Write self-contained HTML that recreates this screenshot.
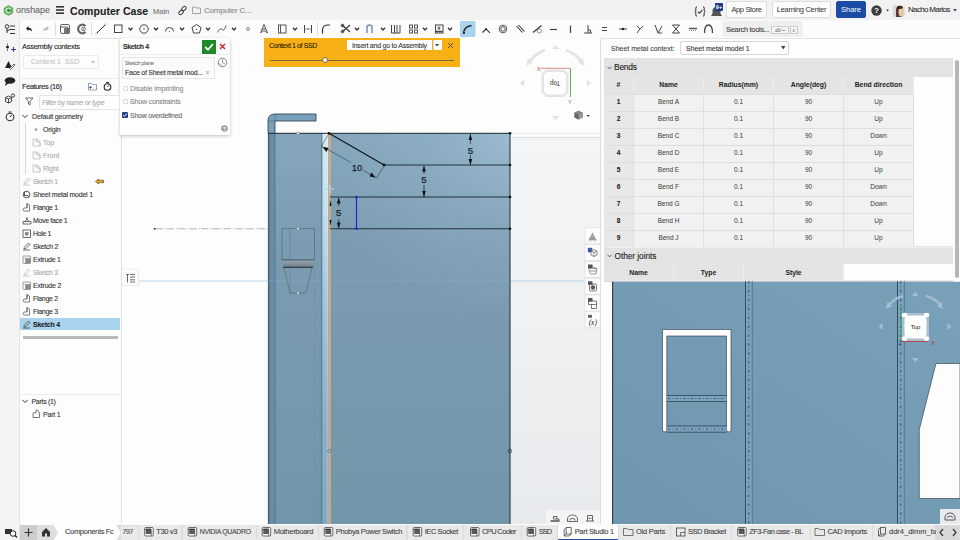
<!DOCTYPE html>
<html><head><meta charset="utf-8">
<style>
*{margin:0;padding:0;box-sizing:border-box}
html,body{width:960px;height:540px;overflow:hidden;background:#fdfdfd;font-family:"Liberation Sans",sans-serif;color:#333;position:relative}
.a{position:absolute}
.t{position:absolute;white-space:nowrap;line-height:1;-webkit-text-stroke:.1px currentColor}
svg{position:absolute;overflow:visible}
#hdr{left:0;top:0;width:960px;height:19.6px;background:#f2f2f3}
#tb{left:0;top:19.6px;width:960px;height:18.4px;background:#fcfcfc}
#rail{left:0;top:19.6px;width:20px;height:521px;background:#f4f4f4;border-right:1px solid #e4e4e4}
#fp{left:20px;top:38px;width:102px;height:486px;background:#fdfdfd;border-right:1px solid #e2e2e2;border-top:1px solid #e6e6e6}
#sk{left:120px;top:38px;width:110px;height:97px;background:#fefefe;box-shadow:0 1px 3px rgba(0,0,0,.25)}
#ctx{left:264px;top:38px;width:196px;height:29px;background:#f7b015}
#rp{left:600px;top:38px;width:360px;height:486px;background:#fdfdfd;border-left:1px solid #dcdcdc;border-top:1px solid #e4e4e4;border-top-left-radius:2px}
#tabs{left:20px;top:524px;width:940px;height:16px;background:#ececec}
.btn{position:absolute;border:1px solid #dcdcdc;border-radius:2px;background:#fdfdfd;font-size:7.5px;color:#333;text-align:center;line-height:16.2px;white-space:nowrap}
</style></head><body>
<!-- viewport background -->
<div class="a" style="left:122px;top:38px;width:478px;height:486px;background:#fdfdfd"></div>
<div class="a" style="left:510px;top:137.5px;width:90px;height:386.5px;background:linear-gradient(#f4f5f6 0%,#eef0f1 50%,#e7eaec 100%)"></div>
<!-- CAD drawing -->
<svg id="cad" style="left:0;top:0" width="960" height="540" viewBox="0 0 960 540">
<defs>
<linearGradient id="body" x1="0" y1="0" x2="0" y2="1">
<stop offset="0" stop-color="#85a6bb"/><stop offset=".3" stop-color="#7b9bb0"/><stop offset="1" stop-color="#7296a9"/>
</linearGradient>
<radialGradient id="bodyR" cx="510" cy="133" r="190" gradientUnits="userSpaceOnUse">
<stop offset="0" stop-color="#9cbdd0" stop-opacity=".95"/><stop offset=".5" stop-color="#90b2c6" stop-opacity=".45"/><stop offset="1" stop-color="#90b2c6" stop-opacity="0"/>
</radialGradient>
<linearGradient id="strip" x1="0" y1="0" x2="0" y2="1">
<stop offset="0" stop-color="#d2ecf7"/><stop offset=".2" stop-color="#bddff0"/><stop offset=".45" stop-color="#98c2de"/><stop offset=".75" stop-color="#80acca"/><stop offset="1" stop-color="#78a4c2"/>
</linearGradient>
<linearGradient id="stripH" x1="0" y1="0" x2="1" y2="0"><stop offset="0" stop-color="#6a90aa" stop-opacity=".35"/><stop offset=".5" stop-color="#fff" stop-opacity="0"/><stop offset="1" stop-color="#fff" stop-opacity=".25"/></linearGradient>
<linearGradient id="leg" x1="0" y1="0" x2="1" y2="0">
<stop offset="0" stop-color="#4e6c82"/><stop offset=".45" stop-color="#6a8ea8"/><stop offset="1" stop-color="#6a8da6"/>
</linearGradient>
</defs>
<!-- faint line right of part -->
<path d="M510 133.4 H600" stroke="#dedede" stroke-width=".8"/><path d="M510 137.4 H600" stroke="#d4d4d4" stroke-width=".8"/>
<!-- dash-dot line -->
<path d="M155.5 228.8 H268" stroke="#aaaaaa" stroke-width=".9" stroke-dasharray="7.2 2 1 1.2"/>
<rect x="153.8" y="227.9" width="1.8" height="1.8" fill="#444"/>
<!-- body -->
<rect x="268" y="133" width="242" height="391" fill="url(#body)"/>
<rect x="329" y="133" width="181" height="200" fill="url(#bodyR)"/>
<rect x="268" y="133" width="7" height="391" fill="url(#leg)"/>
<path d="M268 133 V121 Q268 114 275 114 H316 V121 H275 V133Z" fill="#78a0ba"/>
<path d="M268 133 V121 Q268 114 275 114 H316 V121 H275 V133" fill="none" stroke="#34495a" stroke-width=".9"/>
<path d="M268 121 H275 M275 114 V121" stroke="#4a6a80" stroke-width=".6"/>
<path d="M268.3 133 V524" stroke="#405a6c" stroke-width=".7"/>
<path d="M275 133 V524" stroke="#4a6a80" stroke-width=".7"/>
<rect x="322" y="133" width="6" height="391" fill="url(#strip)"/><rect x="322" y="133" width="6" height="391" fill="url(#stripH)"/>
<path d="M321.7 133 V524" stroke="#4e6e86" stroke-width=".7"/>
<rect x="328.2" y="133" width="2.6" height="391" fill="#ceac8c"/>
<!-- horizontal light blue line -->
<path d="M137 281 H268 M510 281 H600" stroke="#a6d0ea" stroke-width=".8"/>
<path d="M268 281 H510" stroke="#9cc4dc" stroke-width=".7" opacity=".35"/>
<!-- hole feature -->
<g fill="none" stroke="#4d6478" stroke-width=".6">
<rect x="282" y="228.5" width="32.5" height="31.5"/>
<path d="M290 228.5 V293" opacity=".5"/>
<path d="M284 267.5 L290 293 H306 L312 267.5"/>
</g>
<defs><linearGradient id="band" x1="0" y1="0" x2="0" y2="1"><stop offset="0" stop-color="#98a8b2"/><stop offset="1" stop-color="#6a7c88"/></linearGradient></defs>
<path d="M282 260 H314 L313 267.5 H283Z" fill="url(#band)"/>
<path d="M282 260 H314" stroke="#3a4a56" stroke-width=".7"/>
<path d="M283 267.3 H313" stroke="#1e2830" stroke-width=".9"/>
<path d="M314.5 267 V524" stroke="#5a7488" stroke-width=".5" stroke-dasharray="2 1.5" opacity=".6"/>
<circle cx="298" cy="228.7" r="1.2" fill="#fff" stroke="#556" stroke-width=".4"/>
<circle cx="298" cy="293" r="1.2" fill="#fff" stroke="#556" stroke-width=".4"/>
<!-- top edge & sketch lines -->
<path d="M268 133.3 H510" stroke="#1d2a33" stroke-width="1"/>
<circle cx="298" cy="133.3" r="1.3" fill="#fff" stroke="#556" stroke-width=".5"/>
<path d="M329 133.3 L384 165" stroke="#111" stroke-width="1.1"/>
<path d="M384 165 H510 M330 197 H510 M330 228.8 H510" stroke="#25313a" stroke-width="1.1"/>
<path d="M510 133 V524" stroke="#1d2a33" stroke-width="1"/>
<g fill="#111">
<circle cx="329" cy="133.3" r="1.4"/><circle cx="384" cy="165" r="1.4"/>
<circle cx="510" cy="133.3" r="1.3"/><circle cx="510" cy="165" r="1.3"/><circle cx="510" cy="197" r="1.3"/><circle cx="510" cy="228.8" r="1.3"/>
</g>
<path d="M356.5 197 V228.8" stroke="#1a2ad0" stroke-width="1.2"/>
<circle cx="356.5" cy="197" r="1.3" fill="#1a2ad0"/><circle cx="356.5" cy="228.8" r="1.3" fill="#1a2ad0"/>
<!-- dim 10 -->
<g stroke="#1d2a33" stroke-width=".5" fill="none">
<path d="M328 135 L321.5 146"/><path d="M384 166 L376.5 178"/>
<path d="M321.5 146 L351 162.5 M363 170 L376.5 178"/>
</g>
<path d="M322.5 147 L328.5 147.8 L326.5 152Z" fill="#111"/>
<path d="M375.5 177.5 L369.5 176.5 L371.5 172.5Z" fill="#111"/>
<text x="357" y="170.6" font-size="9.4" fill="#18222a" stroke="#18222a" stroke-width=".25" text-anchor="middle" font-family="Liberation Sans">10</text>
<!-- dim 5 top -->
<g stroke="#1d2a33" stroke-width=".75"><path d="M470.4 134 V144 M470.4 155 V165"/><path d="M424 166 V174 M424 185 V197"/><path d="M338.7 198 V206 M338.7 219 V228"/></g>
<g fill="#111">
<path d="M470.4 134 L468.6 140 H472.2Z"/><path d="M470.4 165 L468.6 159 H472.2Z"/>
<path d="M424 165.5 L422.2 171.5 H425.8Z"/><path d="M424 197 L422.2 191 H425.8Z"/>
<path d="M338.7 197.5 L336.9 203.5 H340.5Z"/><path d="M338.7 228.5 L336.9 222.5 H340.5Z"/>
<path d="M330.5 200 L331.5 206 L329.5 206Z"/><path d="M330.5 226 L331.5 220 L329.5 220Z"/>
</g>
<text x="470.4" y="153.9" font-size="9.6" fill="#18222a" stroke="#18222a" stroke-width=".25" text-anchor="middle" font-family="Liberation Sans">5</text>
<text x="424" y="182.6" font-size="9.6" fill="#18222a" stroke="#18222a" stroke-width=".25" text-anchor="middle" font-family="Liberation Sans">5</text>
<text x="338.7" y="216.3" font-size="9.6" fill="#18222a" stroke="#18222a" stroke-width=".25" text-anchor="middle" font-family="Liberation Sans">5</text>
<!-- cursor cross -->
<path d="M330 185 V193 M326 189 H334" stroke="#fff" stroke-width="1.2"/><path d="M330 185 V193 M326 189 H334" stroke="#556" stroke-width=".4"/>
<circle cx="329.2" cy="451" r="1.3" fill="#fff" stroke="#222" stroke-width=".6"/>
<circle cx="510" cy="451" r="1.8" fill="none" stroke="#222" stroke-width=".6"/>
</svg>

<div id="hdr" class="a"></div>
<div id="tb" class="a"></div>
<div id="rail" class="a"></div>
<div id="fp" class="a"></div>
<div id="sk" class="a"></div>
<div id="ctx" class="a"></div>
<div id="rp" class="a"></div>



<!-- HEADER -->
<svg style="left:2.5px;top:4.5px" width="11" height="11" viewBox="0 0 11 11"><path d="M5.5 .6 L9.8 3 V8 L5.5 10.4 L1.2 8 V3Z" fill="#62b45e" stroke="#4e9e4a" stroke-width=".6" stroke-linejoin="round"/><path d="M7.6 4 A2.5 2.5 0 1 0 7.6 7" fill="none" stroke="#e6f2e4" stroke-width="1.1"/><circle cx="5.5" cy="5.5" r="1" fill="#3c7a3a"/></svg>
<div class="t" style="left:16px;top:5.6px;font-size:9px;color:#5a5a5a;-webkit-text-stroke:0;letter-spacing:-0.099px">onshape</div>
<svg style="left:56px;top:6px" width="8" height="8" viewBox="0 0 8 8"><rect x="0" y="0" width="8" height="1.6" fill="#333"/><rect x="0" y="3.2" width="8" height="1.6" fill="#333"/><rect x="0" y="6.4" width="8" height="1.6" fill="#333"/></svg>
<div class="t" style="left:70px;top:5.6px;font-size:10.5px;font-weight:bold;color:#222;letter-spacing:0.044px">Computer Case</div>
<div class="t" style="left:153px;top:8.3px;font-size:7.5px;color:#777">Main</div>
<svg style="left:177.5px;top:6px" width="9" height="9" viewBox="0 0 9 9"><rect x="4.3" y="0" width="3.2" height="5.2" rx="1.6" transform="rotate(45 5.9 2.6)" fill="none" stroke="#333" stroke-width="1"/><rect x="1.5" y="3.8" width="3.2" height="5.2" rx="1.6" transform="rotate(45 3.1 6.4)" fill="none" stroke="#333" stroke-width="1"/></svg>
<svg style="left:192px;top:6px" width="9" height="8" viewBox="0 0 9 8"><path d="M.5 1 H3.5 L4.5 2 H8.5 V7.5 H.5Z" fill="none" stroke="#999" stroke-width=".9"/></svg>
<div class="t" style="left:204px;top:7.2px;font-size:8px;color:#8a8a8a;letter-spacing:-0.193px">Computer C...</div>

<svg style="left:693.5px;top:6px" width="12" height="11" viewBox="0 0 12 11"><path d="M3 .8 Q1.8 .8 1.8 2 V4.3 Q1.8 5.3 .8 5.5 Q1.8 5.7 1.8 6.7 V9 Q1.8 10.2 3 10.2 M9 .8 Q10.2 .8 10.2 2 V4.3 Q10.2 5.3 11.2 5.5 Q10.2 5.7 10.2 6.7 V9 Q10.2 10.2 9 10.2" fill="none" stroke="#333" stroke-width="1"/><path d="M3.8 5.6 L5.5 7.3 L8.3 3.8" fill="none" stroke="#333" stroke-width="1.1"/></svg>
<svg style="left:710px;top:2px" width="14" height="15" viewBox="0 0 14 15"><path d="M1 14 H12 L10.5 11.5 V9 A4 4 0 0 0 2.5 9 V11.5Z" fill="#555"/><rect x="5" y="1" width="8" height="8" rx="1" fill="#1c3c8c"/><text x="9" y="7" font-size="5.5" fill="#fff" text-anchor="middle" font-family="Liberation Sans" font-weight="bold">9+</text></svg>
<div class="btn" style="left:726px;top:1px;width:41px;height:17px;letter-spacing:-.35px">App Store</div>
<div class="btn" style="left:772px;top:1px;width:59px;height:17px;letter-spacing:-.3px">Learning Center</div>
<div class="btn" style="left:836px;top:1px;width:30px;height:17px;background:#1c4ba6;border-color:#1c4ba6;color:#fff">Share</div>
<svg style="left:871px;top:5px" width="20" height="11" viewBox="0 0 20 11"><circle cx="5.5" cy="5.5" r="5.2" fill="#3d3d3d"/><text x="5.5" y="8.3" font-size="7.5" fill="#fff" text-anchor="middle" font-family="Liberation Sans" font-weight="bold">?</text><path d="M15 4.5 L18 4.5 L16.5 6.5Z" fill="#444"/></svg>
<svg style="left:893px;top:5px" width="12" height="12" viewBox="0 0 12 12"><rect width="12" height="12" fill="#ece6e0"/><rect x="0" y="0" width="3" height="12" fill="#d8d8d8"/><path d="M3 12 V5 Q3 1 6.5 1 Q10 1 10 4 L9 12Z" fill="#5a3c2c"/><ellipse cx="8.5" cy="7" rx="3" ry="4.5" fill="#e8caa8"/><path d="M4 1.5 Q7 0 10 2 L9 4 Q6 3 4 5Z" fill="#3a2820"/></svg>
<div class="t" style="left:908px;top:6px;font-size:8px;color:#333;letter-spacing:-0.665px">Nacho Martos</div>
<svg style="left:953px;top:9px" width="5" height="3" viewBox="0 0 5 3"><path d="M0 0 H4 L2 2.5Z" fill="#444"/></svg>


<!-- TOOLBAR -->
<svg style="left:0;top:0" width="960" height="40" viewBox="0 0 960 40" fill="none" stroke="#444" stroke-width="1">
<g stroke="#333">
<circle cx="7" cy="26.5" r="1.8"/><path d="M7 28.5 V33 M7 31 L11 29 M10 26 H15 M10.5 29.5 H15 M10 33.5 H15" />
</g>
<path d="M26 28.5 L28.5 26 L28.5 27.7 Q32 27.7 32 31.5 Q30.5 29.5 28.5 29.7 L28.5 31Z" fill="#222" stroke="none"/>
<path d="M49 28.5 L46.5 26 L46.5 27.7 Q43 27.7 43 31.5 Q44.5 29.5 46.5 29.7 L46.5 31Z" fill="#b8b8b8" stroke="none"/>
<path d="M55.5 22.5 V35.5" stroke="#ddd"/>
<rect x="60.5" y="24.5" width="9" height="9" rx="1.5" stroke="#666"/><rect x="64" y="28" width="5.5" height="5.5" fill="#777" stroke="none"/><path d="M60.5 27 H67.5 V33.5" stroke="#666"/>
<path d="M85.5 26 A4.3 4.3 0 1 0 85.5 32" stroke="#666" stroke-width="2.2"/><circle cx="83.5" cy="29" r="1.8" stroke="#666" stroke-width="1"/><circle cx="83.5" cy="29" r=".6" fill="#666" stroke="none"/>
<path d="M91.5 22.5 V35.5" stroke="#ddd"/>
<path d="M97 33 L105 25" stroke="#333"/><circle cx="96.5" cy="33.5" r=".8" fill="#fff" stroke="#999" stroke-width=".5"/><circle cx="105.5" cy="24.5" r=".8" fill="#fff" stroke="#999" stroke-width=".5"/>
<rect x="114.5" y="25" width="7.5" height="7.5" stroke="#444"/>
<path d="M128.5 27.8 L130.5 30 L132.5 27.8" stroke="#333" stroke-width="1.3"/>
<circle cx="144" cy="29" r="4.2" stroke="#444"/><circle cx="144" cy="29" r=".8" fill="#444" stroke="none"/>
<path d="M154 27.8 L156 30 L158 27.8" stroke="#333" stroke-width="1.3"/>
<path d="M165.5 31.5 A4 4 0 0 1 173.5 31.5" stroke="#444"/><circle cx="169.5" cy="31.5" r=".6" fill="#444" stroke="none"/>
<path d="M180 27.8 L182 30 L184 27.8" stroke="#333" stroke-width="1.3"/>
<path d="M196.5 24.5 L201 27.5 L199.5 33 L193.5 33 L192 27.5Z" stroke="#444"/><circle cx="196.5" cy="29.5" r=".6" fill="#444" stroke="none"/>
<path d="M206 27.8 L208 30 L210 27.8" stroke="#333" stroke-width="1.3"/>
<path d="M217.5 32.5 Q220 27 222 29.5 Q224 32 226 25.5" stroke="#666"/>
<path d="M232 27.8 L234 30 L236 27.8" stroke="#333" stroke-width="1.3"/>
<circle cx="248" cy="29" r="1.5" stroke="#666" stroke-width=".8"/>
<path d="M260.5 33 L264 24.5 L267.5 33 M261.5 30.5 Q264 27 266.5 30.5" stroke="#555"/><path d="M261 32.5 Q264 29 267 33" stroke="#555" />
<rect x="278.5" y="25" width="7.5" height="8" stroke="#555"/><path d="M280.5 25 V33" stroke="#555"/>
<path d="M293 27.8 L295 30 L297 27.8" stroke="#333" stroke-width="1.3"/>
<path d="M304.5 25 V33 M311.5 25 V33 M306.5 29 H309.5" stroke="#444"/><path d="M304.5 29 H305.5 M310.5 29 H311.5" stroke="#444"/>
<path d="M317.5 22.5 V35.5" stroke="#ddd"/>
<path d="M322.5 33.5 V30 Q322.5 25 328.5 25 H330" stroke="#333" stroke-width="1.2"/>
<path d="M342 25 L350 32 M342 32 L350 25" stroke="#333" stroke-width="1.1"/><circle cx="342.5" cy="25.5" r="1.3" stroke="#333"/><circle cx="342.5" cy="31.5" r="1.3" stroke="#333"/>
<path d="M355 27.8 L357 30 L359 27.8" stroke="#333" stroke-width="1.3"/>
<path d="M367 33 V27.5 Q367 25 369.5 25 Q372 25 372 27.5 V33" stroke="#7a90b0" stroke-width="1.5"/>
<path d="M381 27.8 L383 30 L385 27.8" stroke="#333" stroke-width="1.3"/>
<path d="M391.5 25 V33 H400 V25 M394.5 25 V33 M397 25 V33" stroke="#444"/>
<rect x="409.5" y="25" width="3" height="3" stroke="#555"/><rect x="414.5" y="25" width="3" height="3" stroke="#555"/><rect x="409.5" y="30" width="3" height="3" stroke="#555"/><rect x="414.5" y="30" width="3" height="3" stroke="#555"/>
<path d="M423 27.8 L425 30 L427 27.8" stroke="#333" stroke-width="1.3"/>
<rect x="435.5" y="25" width="7.5" height="8" stroke="#444"/><path d="M439 26.5 V30 M437.5 28 H440.5" stroke="#444"/><path d="M436 31.5 H442.5" stroke="#444" stroke-width="1.5"/>
<path d="M448 27.8 L450 30 L452 27.8" stroke="#333" stroke-width="1.3"/>
<rect x="460" y="21" width="15.5" height="16" rx="1.5" fill="#a8d2ee" stroke="none"/>
<path d="M463.5 33.5 Q464 26.5 471.5 25.5" stroke="#222" stroke-width="1.4"/><circle cx="464" cy="33" r="1.1" fill="#222" stroke="none"/>
<path d="M482.5 32.5 L486 29 L490 32.8" stroke="#333" stroke-width="1.1"/><circle cx="486" cy="29" r="1" fill="#222" stroke="none"/>
<circle cx="503" cy="29" r="3.8" stroke="#555"/><circle cx="503" cy="29" r="2.2" stroke="#555"/>
<path d="M516.5 26 L522.5 32.5 M518.5 25 L524.5 31.5" stroke="#333" stroke-width="1.1"/>
<path d="M533 32.5 L541.5 25.5" stroke="#333" stroke-width="1.1"/><circle cx="539.3" cy="31" r="2.1" stroke="#777" stroke-width=".8"/>
<path d="M550 29.5 H557" stroke="#444" stroke-width="1.2"/>
<path d="M570.5 25.5 V33" stroke="#444" stroke-width="1.2"/>
<path d="M584 33 H592 M588 25 V33 M588 30 H590.5 V33" stroke="#444"/>
<path d="M602 27.5 H607 M602 30.5 H607" stroke="#444"/>
<path d="M619 29 H627" stroke="#444"/><circle cx="623" cy="29" r="1.3" fill="#222" stroke="none"/>
<path d="M637 26 L640 29 L643 26 M640 29 L637 33" stroke="#444"/>
<path d="M655 25 L658 33 L662 26 M658 33 H662" stroke="#444"/>
<path d="M672.5 25 H679.5 L676 29 L679.5 33 H672.5 L676 29Z" stroke="#444"/>
<path d="M689 28.5 H697" stroke="#555" stroke-width="1.5"/><path d="M689 30.5 H697" stroke="#7a90b0" stroke-dasharray="1 1"/>
<path d="M704.5 33 Q704.5 25 708.5 25 Q712.5 25 712.5 33" stroke="#444" stroke-width="1.3"/>
</svg>
<div class="a" style="left:722px;top:21px;width:81px;height:16px;background:#efefef;border-radius:2px"></div>
<div class="t" style="left:726px;top:25.8px;font-size:7.5px;color:#444;letter-spacing:-0.321px">Search tools...</div>
<div class="a" style="left:771px;top:26px;width:18px;height:8px;border:1px solid #ccc;background:#f6f6f6;font-size:5.5px;color:#444;font-family:'Liberation Serif',serif;text-align:center;line-height:6.5px">alt/<span style="font-family:'Liberation Sans',sans-serif">~</span></div>
<div class="a" style="left:790px;top:26px;width:8px;height:8px;border:1px solid #ccc;background:#f6f6f6;font-size:5.5px;color:#444;font-family:'Liberation Serif',serif;text-align:center;line-height:6.5px">c</div>
<div class="a" style="left:20px;top:37.5px;width:102px;height:1px;background:#e3e3e3"></div>


<!-- RAIL ICONS -->
<svg style="left:0;top:38px" width="20" height="90" viewBox="0 38 20 90" fill="none" stroke="#333" stroke-width="1">
<path d="M7.5 43.5 V45 M7.5 49 V51" stroke="#666"/><circle cx="7.5" cy="47" r="1.5" fill="#222" stroke="none"/><path d="M11 49.5 H16 M13.5 47 V52" stroke="#3a3aa8" stroke-width="1"/>
<path d="M5 68 L8.5 61 L12 68Z" fill="#222" stroke="none"/><path d="M9.5 68.5 L14 64 L15 65 L10.5 69.5Z" fill="#fff" stroke="#444" stroke-width=".8"/>
<ellipse cx="10" cy="80.5" rx="5.3" ry="3.2" fill="#222" stroke="none"/><path d="M6 82 L5 86 L9 83Z" fill="#222" stroke="none"/>
<path d="M5.5 97.5 L8.5 96 L11.5 97.5 V101.5 L8.5 103 L5.5 101.5Z M5.5 97.5 L8.5 99 L11.5 97.5 M8.5 99 V103" stroke="#333" stroke-width=".9"/><circle cx="13" cy="95.5" r="1.6" stroke="#333" stroke-width=".9"/>
<circle cx="10" cy="117" r="3.8" stroke="#333" stroke-width="1.1"/><path d="M8.5 112 H11.5 M10 117 L11.5 115" stroke="#333"/>
</svg>

<!-- FEATURE PANEL -->
<div class="t" style="left:22px;top:43px;font-size:7.5px;color:#222;letter-spacing:-0.286px">Assembly contexts</div>
<div class="a" style="left:22.5px;top:54.5px;width:76px;height:14px;border:1px solid #eaeaea;border-radius:2px;background:#fdfdfd"></div>
<div class="t" style="left:31px;top:58px;font-size:7px;color:#c4c4c4">Context 1 &nbsp;<i>SSD</i></div>
<svg style="left:91px;top:61px" width="4" height="3" viewBox="0 0 4 3"><path d="M0 0 H4 L2 2.5Z" fill="#bbb"/></svg>
<div class="a" style="left:20px;top:78px;width:100px;height:1px;background:#ececec"></div>
<div class="t" style="left:22px;top:83px;font-size:7.5px;color:#222;letter-spacing:-0.422px">Features (16)</div>
<svg style="left:86px;top:80px" width="30" height="12" viewBox="86 80 30 12" fill="none">
<path d="M88.5 83.5 H91.5 L92.5 84.5 H96.5 V90 H88.5Z" stroke="#7a8aa0" stroke-width=".8"/><path d="M89 87.5 H92 M90.5 86 V89" stroke="#3a5aa8" stroke-width=".8"/>
<circle cx="107.5" cy="87" r="3.3" stroke="#222" stroke-width="1.1"/><path d="M106 82.5 H109 M107.5 87 L108.8 85.5" stroke="#222" stroke-width=".9"/>
</svg>
<svg style="left:25px;top:97px" width="9" height="9" viewBox="0 0 9 9"><path d="M.5 1 H8 L5 4.5 V8 L3.5 7 V4.5Z" fill="none" stroke="#444" stroke-width=".8"/></svg>
<div class="a" style="left:39px;top:95px;width:81px;height:15px;border:1px solid #e4e4e4;border-radius:1px;background:#fff"></div>
<div class="t" style="left:42px;top:99px;font-size:7px;color:#aaa;font-style:italic;letter-spacing:-0.242px">Filter by name or type</div>

<div class="a" style="left:20px;top:318px;width:100px;height:12px;background:#a9d3ef"></div>
<div class="t" style="left:32px;top:112.8px;font-size:7px;color:#333;letter-spacing:-0.159px">Default geometry</div>
<svg style="left:22px;top:114px" width="6" height="5" viewBox="0 0 6 5"><path d="M.5 1 L3 3.5 L5.5 1" fill="none" stroke="#333" stroke-width="1"/></svg>
<div class="a" style="left:25px;top:123px;width:1px;height:51px;background:#d6d6d6"></div>
<div class="t" style="left:43px;top:126.0px;font-size:7px;color:#333;letter-spacing:-0.210px">Origin</div>
<div class="t" style="left:43px;top:139.0px;font-size:7px;color:#aaa;letter-spacing:0.017px">Top</div>
<div class="t" style="left:43px;top:152.0px;font-size:7px;color:#aaa;letter-spacing:-0.004px">Front</div>
<div class="t" style="left:43px;top:165.0px;font-size:7px;color:#aaa;letter-spacing:-0.180px">Right</div>
<div class="t" style="left:33px;top:178.0px;font-size:7px;color:#aaa;letter-spacing:-0.303px">Sketch 1</div>
<div class="t" style="left:33px;top:191.0px;font-size:7px;color:#333;letter-spacing:-0.232px">Sheet metal model 1</div>
<div class="t" style="left:33px;top:204.0px;font-size:7px;color:#333;letter-spacing:-0.296px">Flange 1</div>
<div class="t" style="left:33px;top:217.0px;font-size:7px;color:#333;letter-spacing:-0.346px">Move face 1</div>
<div class="t" style="left:33px;top:230.0px;font-size:7px;color:#333;letter-spacing:-0.363px">Hole 1</div>
<div class="t" style="left:33px;top:243.0px;font-size:7px;color:#333;letter-spacing:-0.260px">Sketch 2</div>
<div class="t" style="left:33px;top:256.0px;font-size:7px;color:#333;letter-spacing:-0.255px">Extrude 1</div>
<div class="t" style="left:33px;top:269.0px;font-size:7px;color:#aaa;letter-spacing:-0.295px">Sketch 3</div>
<div class="t" style="left:33px;top:282.0px;font-size:7px;color:#333;letter-spacing:-0.193px">Extrude 2</div>
<div class="t" style="left:33px;top:295.0px;font-size:7px;color:#333;letter-spacing:-0.296px">Flange 2</div>
<div class="t" style="left:33px;top:308.0px;font-size:7px;color:#333;letter-spacing:-0.296px">Flange 3</div>
<div class="t" style="left:33px;top:321.0px;font-size:7px;color:#222;font-weight:bold;letter-spacing:-0.232px">Sketch 4</div>
<svg style="left:0;top:0" width="960" height="540" viewBox="0 0 960 540"><circle cx="36" cy="129.5" r="1.2" fill="#999"/><path d="M33 139.0 H37 V142.0 H40 V146.0 H33Z M35 141.0 H37" fill="none" stroke="#bbb" stroke-width=".8"/><path d="M37 139.0 L40 141.5 V146.0" fill="none" stroke="#bbb" stroke-width=".8"/><path d="M33 152.0 H37 V155.0 H40 V159.0 H33Z M35 154.0 H37" fill="none" stroke="#bbb" stroke-width=".8"/><path d="M37 152.0 L40 154.5 V159.0" fill="none" stroke="#bbb" stroke-width=".8"/><path d="M33 165.0 H37 V168.0 H40 V172.0 H33Z M35 167.0 H37" fill="none" stroke="#bbb" stroke-width=".8"/><path d="M37 165.0 L40 167.5 V172.0" fill="none" stroke="#bbb" stroke-width=".8"/><path d="M23 185.0 H30 M24 184.0 L24.3 182.3 L28.5 178.0 L30 179.5 L25.8 183.7Z" fill="none" stroke="#bbb" stroke-width=".8"/><circle cx="26.5" cy="194.5" r="3.3" fill="none" stroke="#444" stroke-width=".9"/><path d="M24.5 192.0 V195.5 H28 L29 197.0" fill="none" stroke="#444" stroke-width=".9"/><path d="M27.0 203.5 L29.5 205.0 V211.0 H24.5 Q23.0 211.0 23.0 209.5 L24.0 208.0 H27.0Z M27.0 208.0 V203.5" fill="none" stroke="#555" stroke-width=".75"/><path d="M23 221.5 H31 V224.0 H23Z" fill="none" stroke="#444" stroke-width=".8"/><path d="M25 221.5 L27 218.5 L29 221.5 M27 217.0 V219.5" fill="none" stroke="#444" stroke-width=".8"/><rect x="23" y="230.0" width="7.5" height="7.5" fill="none" stroke="#444" stroke-width=".8"/><circle cx="26.75" cy="233.8" r="2" fill="#888"/><path d="M23 250.0 H30 M24 249.0 L24.3 247.3 L28.5 243.0 L30 244.5 L25.8 248.7Z" fill="none" stroke="#444" stroke-width=".8"/><rect x="23.0" y="256.0" width="7.5" height="7.5" rx=".8" fill="none" stroke="#777" stroke-width=".7"/><rect x="25.2" y="258.2" width="5.3" height="5.3" fill="#8a8a8a"/><path d="M23.0 258.2 H30.5" stroke="#999" stroke-width=".5"/><path d="M23 276.0 H30 M24 275.0 L24.3 273.3 L28.5 269.0 L30 270.5 L25.8 274.7Z" fill="none" stroke="#bbb" stroke-width=".8"/><rect x="23.0" y="282.0" width="7.5" height="7.5" rx=".8" fill="none" stroke="#777" stroke-width=".7"/><rect x="25.2" y="284.2" width="5.3" height="5.3" fill="#8a8a8a"/><path d="M23.0 284.2 H30.5" stroke="#999" stroke-width=".5"/><path d="M27.0 294.5 L29.5 296.0 V302.0 H24.5 Q23.0 302.0 23.0 300.5 L24.0 299.0 H27.0Z M27.0 299.0 V294.5" fill="none" stroke="#555" stroke-width=".75"/><path d="M27.0 307.5 L29.5 309.0 V315.0 H24.5 Q23.0 315.0 23.0 313.5 L24.0 312.0 H27.0Z M27.0 312.0 V307.5" fill="none" stroke="#555" stroke-width=".75"/><path d="M23 328.0 H30 M24 327.0 L24.3 325.3 L28.5 321.0 L30 322.5 L25.8 326.7Z" fill="none" stroke="#444" stroke-width=".8"/><path d="M95.5 181.5 L98.5 179 V180.3 H103.5 V182.7 H98.5 V184Z" fill="#e8b030" stroke="#6a4a10" stroke-width=".7"/></svg>
<div class="a" style="left:23px;top:335.5px;width:95px;height:3px;background:#b8b8b8"></div>
<div class="a" style="left:20px;top:394px;width:102px;height:1px;background:#ececec"></div>
<svg style="left:22px;top:399px" width="6" height="5" viewBox="0 0 6 5"><path d="M.5 1 L3 3.5 L5.5 1" fill="none" stroke="#333" stroke-width="1"/></svg>
<div class="t" style="left:31.5px;top:397.5px;font-size:7px;color:#333;letter-spacing:-0.302px">Parts (1)</div>
<svg style="left:32px;top:409px" width="9" height="9" viewBox="0 0 9 9"><path d="M1 8.5 H7.5 V4 L5.5 1 H4 V4 L1.5 3.5 L1 5Z" fill="none" stroke="#555" stroke-width=".8"/></svg>
<div class="t" style="left:43px;top:410.5px;font-size:7px;color:#333;letter-spacing:-0.211px">Part 1</div>

<!-- SKETCH DIALOG -->
<div class="t" style="left:123px;top:43px;font-size:7px;font-weight:bold;color:#333;letter-spacing:-0.396px">Sketch 4</div>
<div class="a" style="left:202px;top:40px;width:14px;height:13.5px;background:#1f8a2a"></div>
<svg style="left:202px;top:40px" width="14" height="14" viewBox="0 0 14 14"><path d="M3.2 7 L6 9.8 L10.8 4.2" fill="none" stroke="#fff" stroke-width="1.8"/></svg>
<svg style="left:219px;top:43px" width="7" height="7" viewBox="0 0 7 7"><path d="M1 1 L6 6 M6 1 L1 6" stroke="#c82828" stroke-width="1.4"/></svg>
<div class="a" style="left:120px;top:53.5px;width:110px;height:1px;background:#eee"></div>
<div class="a" style="left:121.5px;top:56.5px;width:93.5px;height:22px;border:1px solid #e6e6e6;background:#fbfbfb"></div>
<div class="t" style="left:125px;top:60.5px;font-size:5.2px;color:#777;letter-spacing:-0.105px">Sketch plane</div>
<div class="t" style="left:125px;top:69px;font-size:7px;color:#333;letter-spacing:-0.249px">Face of Sheet metal mod...</div>
<div class="t" style="left:205.5px;top:69px;font-size:7px;color:#aaa">×</div>
<svg style="left:217px;top:57px" width="11" height="11" viewBox="0 0 11 11"><circle cx="5.5" cy="5.5" r="4.3" fill="none" stroke="#777" stroke-width=".9"/><path d="M5.5 2.5 V5.5 L8 7" fill="none" stroke="#777" stroke-width=".8"/><path d="M2.5 6 A3 3 0 0 0 5.5 8.5" fill="none" stroke="#999" stroke-width=".7"/></svg>
<div class="a" style="left:122.5px;top:85.5px;width:5px;height:5px;border:1px solid #ddd;background:#fff"></div>
<div class="t" style="left:130px;top:84.5px;font-size:7px;color:#8a8a8a;letter-spacing:-0.130px">Disable imprinting</div>
<div class="a" style="left:122.5px;top:99px;width:5px;height:5px;border:1px solid #ddd;background:#fff"></div>
<div class="t" style="left:130px;top:98px;font-size:7px;color:#858585;letter-spacing:-0.176px">Show constraints</div>
<div class="a" style="left:122px;top:112px;width:6px;height:6px;background:#233f86;border-radius:1px"></div>
<svg style="left:122px;top:112px" width="6" height="6" viewBox="0 0 6 6"><path d="M1.2 3 L2.5 4.3 L4.8 1.6" fill="none" stroke="#fff" stroke-width="1"/></svg>
<div class="t" style="left:130px;top:112px;font-size:7px;color:#666;letter-spacing:-0.258px">Show overdefined</div>
<svg style="left:221px;top:125px" width="7" height="7" viewBox="0 0 7 7"><circle cx="3.5" cy="3.5" r="3.3" fill="#999"/><text x="3.5" y="5.6" font-size="5.5" fill="#fff" text-anchor="middle" font-family="Liberation Sans" font-weight="bold">?</text></svg>

<!-- CONTEXT BAR -->
<div class="t" style="left:269px;top:41.6px;font-size:7px;color:#2a2000;letter-spacing:-0.381px">Context 1 of SSD</div>
<div class="a" style="left:347px;top:40px;width:85px;height:10px;background:#fff"></div>
<div class="t" style="left:352px;top:41.8px;font-size:7px;color:#333;letter-spacing:-0.232px">Insert and go to Assembly</div>
<div class="a" style="left:432.5px;top:40px;width:9px;height:10px;background:#fff;border-left:1px solid #ddd"></div>
<svg style="left:435px;top:44px" width="4" height="3" viewBox="0 0 4 3"><path d="M0 0 H4 L2 2.5Z" fill="#444"/></svg>
<svg style="left:447px;top:42px" width="7" height="7" viewBox="0 0 7 7"><path d="M1 1 L6 6 M6 1 L1 6" stroke="#6a4a10" stroke-width="1"/></svg>
<div class="a" style="left:270px;top:59.5px;width:184px;height:1.2px;background:#7a6a40"></div>
<div class="a" style="left:321.5px;top:57px;width:6px;height:6px;border-radius:50%;background:#fff;border:1px solid #7a6a40"></div>

<div class="t" style="left:611px;top:44.5px;font-size:7px;color:#444;letter-spacing:-0.010px">Sheet metal context:</div>
<div class="a" style="left:679.5px;top:40.5px;width:109px;height:14px;border:1px solid #d6d6d6;border-radius:2px;background:#fff"></div>
<div class="t" style="left:686px;top:44.5px;font-size:7px;color:#333;letter-spacing:-0.032px">Sheet metal model 1</div>
<svg style="left:781px;top:46px" width="5" height="4" viewBox="0 0 5 4"><path d="M0 0 H4.5 L2.25 3.5Z" fill="#444"/></svg>
<div class="a" style="left:603.5px;top:58px;width:349.5px;height:223.5px;background:#e6e6e6;border-bottom:1px solid #d6d6d6"></div>
<div class="a" style="left:603.5px;top:58px;width:349.5px;height:18.5px;background:#e3e3e3"></div>
<svg style="left:607px;top:66px" width="5" height="4" viewBox="0 0 5 4"><path d="M.5 .8 L2.5 2.8 L4.5 .8" fill="none" stroke="#333" stroke-width=".8"/></svg>
<div class="t" style="left:614px;top:63.2px;font-size:8.5px;color:#222;letter-spacing:-0.273px">Bends</div>
<div class="a" style="left:913.5px;top:76.5px;width:39.5px;height:169.5px;background:#fdfdfd"></div>
<div class="a" style="left:603.5px;top:76.5px;width:30.0px;height:17px;background:#e4e4e4;border-right:1px solid #ececec;border-top:1px solid #e9e9e9"></div>
<div class="t" style="left:603.5px;top:82px;width:30.0px;text-align:center;font-size:6.8px;font-weight:bold;color:#222;-webkit-text-stroke:0">#</div>
<div class="a" style="left:633.5px;top:76.5px;width:70.0px;height:17px;background:#e4e4e4;border-right:1px solid #ececec;border-top:1px solid #e9e9e9"></div>
<div class="t" style="left:633.5px;top:82px;width:70.0px;text-align:center;font-size:6.8px;font-weight:bold;color:#222;-webkit-text-stroke:0">Name</div>
<div class="a" style="left:703.5px;top:76.5px;width:70.0px;height:17px;background:#e4e4e4;border-right:1px solid #ececec;border-top:1px solid #e9e9e9"></div>
<div class="t" style="left:703.5px;top:82px;width:70.0px;text-align:center;font-size:6.8px;font-weight:bold;color:#222;-webkit-text-stroke:0">Radius(mm)</div>
<div class="a" style="left:773.5px;top:76.5px;width:70.0px;height:17px;background:#e4e4e4;border-right:1px solid #ececec;border-top:1px solid #e9e9e9"></div>
<div class="t" style="left:773.5px;top:82px;width:70.0px;text-align:center;font-size:6.8px;font-weight:bold;color:#222;-webkit-text-stroke:0">Angle(deg)</div>
<div class="a" style="left:843.5px;top:76.5px;width:70.0px;height:17px;background:#e4e4e4;border-right:1px solid #ececec;border-top:1px solid #e9e9e9"></div>
<div class="t" style="left:843.5px;top:82px;width:70.0px;text-align:center;font-size:6.8px;font-weight:bold;color:#222;-webkit-text-stroke:0">Bend direction</div>
<div class="a" style="left:603.5px;top:93.5px;width:30.0px;height:17px;background:#e8e8e8;border-top:1px solid #dedede;border-right:1px solid #e0e0e0"></div>
<div class="t" style="left:603.5px;top:98.7px;width:30.0px;text-align:center;font-size:6.5px;font-weight:bold;color:#222">1</div>
<div class="a" style="left:633.5px;top:93.5px;width:70.0px;height:17px;background:#f1f1f1;border-top:1px solid #dedede;border-right:1px solid #e0e0e0"></div>
<div class="t" style="left:633.5px;top:98.7px;width:70.0px;text-align:center;font-size:6.5px;color:#383838;-webkit-text-stroke:0">Bend A</div>
<div class="a" style="left:703.5px;top:93.5px;width:70.0px;height:17px;background:#f1f1f1;border-top:1px solid #dedede;border-right:1px solid #e0e0e0"></div>
<div class="t" style="left:703.5px;top:98.7px;width:70.0px;text-align:center;font-size:6.5px;color:#383838;-webkit-text-stroke:0">0.1</div>
<div class="a" style="left:773.5px;top:93.5px;width:70.0px;height:17px;background:#f1f1f1;border-top:1px solid #dedede;border-right:1px solid #e0e0e0"></div>
<div class="t" style="left:773.5px;top:98.7px;width:70.0px;text-align:center;font-size:6.5px;color:#383838;-webkit-text-stroke:0">90</div>
<div class="a" style="left:843.5px;top:93.5px;width:70.0px;height:17px;background:#f1f1f1;border-top:1px solid #dedede;border-right:1px solid #e0e0e0"></div>
<div class="t" style="left:843.5px;top:98.7px;width:70.0px;text-align:center;font-size:6.5px;color:#383838;-webkit-text-stroke:0">Up</div>
<div class="a" style="left:603.5px;top:110.5px;width:30.0px;height:17px;background:#e8e8e8;border-top:1px solid #dedede;border-right:1px solid #e0e0e0"></div>
<div class="t" style="left:603.5px;top:115.7px;width:30.0px;text-align:center;font-size:6.5px;font-weight:bold;color:#222">2</div>
<div class="a" style="left:633.5px;top:110.5px;width:70.0px;height:17px;background:#f1f1f1;border-top:1px solid #dedede;border-right:1px solid #e0e0e0"></div>
<div class="t" style="left:633.5px;top:115.7px;width:70.0px;text-align:center;font-size:6.5px;color:#383838;-webkit-text-stroke:0">Bend B</div>
<div class="a" style="left:703.5px;top:110.5px;width:70.0px;height:17px;background:#f1f1f1;border-top:1px solid #dedede;border-right:1px solid #e0e0e0"></div>
<div class="t" style="left:703.5px;top:115.7px;width:70.0px;text-align:center;font-size:6.5px;color:#383838;-webkit-text-stroke:0">0.1</div>
<div class="a" style="left:773.5px;top:110.5px;width:70.0px;height:17px;background:#f1f1f1;border-top:1px solid #dedede;border-right:1px solid #e0e0e0"></div>
<div class="t" style="left:773.5px;top:115.7px;width:70.0px;text-align:center;font-size:6.5px;color:#383838;-webkit-text-stroke:0">90</div>
<div class="a" style="left:843.5px;top:110.5px;width:70.0px;height:17px;background:#f1f1f1;border-top:1px solid #dedede;border-right:1px solid #e0e0e0"></div>
<div class="t" style="left:843.5px;top:115.7px;width:70.0px;text-align:center;font-size:6.5px;color:#383838;-webkit-text-stroke:0">Up</div>
<div class="a" style="left:603.5px;top:127.5px;width:30.0px;height:17px;background:#e8e8e8;border-top:1px solid #dedede;border-right:1px solid #e0e0e0"></div>
<div class="t" style="left:603.5px;top:132.7px;width:30.0px;text-align:center;font-size:6.5px;font-weight:bold;color:#222">3</div>
<div class="a" style="left:633.5px;top:127.5px;width:70.0px;height:17px;background:#f1f1f1;border-top:1px solid #dedede;border-right:1px solid #e0e0e0"></div>
<div class="t" style="left:633.5px;top:132.7px;width:70.0px;text-align:center;font-size:6.5px;color:#383838;-webkit-text-stroke:0">Bend C</div>
<div class="a" style="left:703.5px;top:127.5px;width:70.0px;height:17px;background:#f1f1f1;border-top:1px solid #dedede;border-right:1px solid #e0e0e0"></div>
<div class="t" style="left:703.5px;top:132.7px;width:70.0px;text-align:center;font-size:6.5px;color:#383838;-webkit-text-stroke:0">0.1</div>
<div class="a" style="left:773.5px;top:127.5px;width:70.0px;height:17px;background:#f1f1f1;border-top:1px solid #dedede;border-right:1px solid #e0e0e0"></div>
<div class="t" style="left:773.5px;top:132.7px;width:70.0px;text-align:center;font-size:6.5px;color:#383838;-webkit-text-stroke:0">90</div>
<div class="a" style="left:843.5px;top:127.5px;width:70.0px;height:17px;background:#f1f1f1;border-top:1px solid #dedede;border-right:1px solid #e0e0e0"></div>
<div class="t" style="left:843.5px;top:132.7px;width:70.0px;text-align:center;font-size:6.5px;color:#383838;-webkit-text-stroke:0">Down</div>
<div class="a" style="left:603.5px;top:144.5px;width:30.0px;height:17px;background:#e8e8e8;border-top:1px solid #dedede;border-right:1px solid #e0e0e0"></div>
<div class="t" style="left:603.5px;top:149.7px;width:30.0px;text-align:center;font-size:6.5px;font-weight:bold;color:#222">4</div>
<div class="a" style="left:633.5px;top:144.5px;width:70.0px;height:17px;background:#f1f1f1;border-top:1px solid #dedede;border-right:1px solid #e0e0e0"></div>
<div class="t" style="left:633.5px;top:149.7px;width:70.0px;text-align:center;font-size:6.5px;color:#383838;-webkit-text-stroke:0">Bend D</div>
<div class="a" style="left:703.5px;top:144.5px;width:70.0px;height:17px;background:#f1f1f1;border-top:1px solid #dedede;border-right:1px solid #e0e0e0"></div>
<div class="t" style="left:703.5px;top:149.7px;width:70.0px;text-align:center;font-size:6.5px;color:#383838;-webkit-text-stroke:0">0.1</div>
<div class="a" style="left:773.5px;top:144.5px;width:70.0px;height:17px;background:#f1f1f1;border-top:1px solid #dedede;border-right:1px solid #e0e0e0"></div>
<div class="t" style="left:773.5px;top:149.7px;width:70.0px;text-align:center;font-size:6.5px;color:#383838;-webkit-text-stroke:0">90</div>
<div class="a" style="left:843.5px;top:144.5px;width:70.0px;height:17px;background:#f1f1f1;border-top:1px solid #dedede;border-right:1px solid #e0e0e0"></div>
<div class="t" style="left:843.5px;top:149.7px;width:70.0px;text-align:center;font-size:6.5px;color:#383838;-webkit-text-stroke:0">Up</div>
<div class="a" style="left:603.5px;top:161.5px;width:30.0px;height:17px;background:#e8e8e8;border-top:1px solid #dedede;border-right:1px solid #e0e0e0"></div>
<div class="t" style="left:603.5px;top:166.7px;width:30.0px;text-align:center;font-size:6.5px;font-weight:bold;color:#222">5</div>
<div class="a" style="left:633.5px;top:161.5px;width:70.0px;height:17px;background:#f1f1f1;border-top:1px solid #dedede;border-right:1px solid #e0e0e0"></div>
<div class="t" style="left:633.5px;top:166.7px;width:70.0px;text-align:center;font-size:6.5px;color:#383838;-webkit-text-stroke:0">Bend E</div>
<div class="a" style="left:703.5px;top:161.5px;width:70.0px;height:17px;background:#f1f1f1;border-top:1px solid #dedede;border-right:1px solid #e0e0e0"></div>
<div class="t" style="left:703.5px;top:166.7px;width:70.0px;text-align:center;font-size:6.5px;color:#383838;-webkit-text-stroke:0">0.1</div>
<div class="a" style="left:773.5px;top:161.5px;width:70.0px;height:17px;background:#f1f1f1;border-top:1px solid #dedede;border-right:1px solid #e0e0e0"></div>
<div class="t" style="left:773.5px;top:166.7px;width:70.0px;text-align:center;font-size:6.5px;color:#383838;-webkit-text-stroke:0">90</div>
<div class="a" style="left:843.5px;top:161.5px;width:70.0px;height:17px;background:#f1f1f1;border-top:1px solid #dedede;border-right:1px solid #e0e0e0"></div>
<div class="t" style="left:843.5px;top:166.7px;width:70.0px;text-align:center;font-size:6.5px;color:#383838;-webkit-text-stroke:0">Up</div>
<div class="a" style="left:603.5px;top:178.5px;width:30.0px;height:17px;background:#e8e8e8;border-top:1px solid #dedede;border-right:1px solid #e0e0e0"></div>
<div class="t" style="left:603.5px;top:183.7px;width:30.0px;text-align:center;font-size:6.5px;font-weight:bold;color:#222">6</div>
<div class="a" style="left:633.5px;top:178.5px;width:70.0px;height:17px;background:#f1f1f1;border-top:1px solid #dedede;border-right:1px solid #e0e0e0"></div>
<div class="t" style="left:633.5px;top:183.7px;width:70.0px;text-align:center;font-size:6.5px;color:#383838;-webkit-text-stroke:0">Bend F</div>
<div class="a" style="left:703.5px;top:178.5px;width:70.0px;height:17px;background:#f1f1f1;border-top:1px solid #dedede;border-right:1px solid #e0e0e0"></div>
<div class="t" style="left:703.5px;top:183.7px;width:70.0px;text-align:center;font-size:6.5px;color:#383838;-webkit-text-stroke:0">0.1</div>
<div class="a" style="left:773.5px;top:178.5px;width:70.0px;height:17px;background:#f1f1f1;border-top:1px solid #dedede;border-right:1px solid #e0e0e0"></div>
<div class="t" style="left:773.5px;top:183.7px;width:70.0px;text-align:center;font-size:6.5px;color:#383838;-webkit-text-stroke:0">90</div>
<div class="a" style="left:843.5px;top:178.5px;width:70.0px;height:17px;background:#f1f1f1;border-top:1px solid #dedede;border-right:1px solid #e0e0e0"></div>
<div class="t" style="left:843.5px;top:183.7px;width:70.0px;text-align:center;font-size:6.5px;color:#383838;-webkit-text-stroke:0">Down</div>
<div class="a" style="left:603.5px;top:195.5px;width:30.0px;height:17px;background:#e8e8e8;border-top:1px solid #dedede;border-right:1px solid #e0e0e0"></div>
<div class="t" style="left:603.5px;top:200.7px;width:30.0px;text-align:center;font-size:6.5px;font-weight:bold;color:#222">7</div>
<div class="a" style="left:633.5px;top:195.5px;width:70.0px;height:17px;background:#f1f1f1;border-top:1px solid #dedede;border-right:1px solid #e0e0e0"></div>
<div class="t" style="left:633.5px;top:200.7px;width:70.0px;text-align:center;font-size:6.5px;color:#383838;-webkit-text-stroke:0">Bend G</div>
<div class="a" style="left:703.5px;top:195.5px;width:70.0px;height:17px;background:#f1f1f1;border-top:1px solid #dedede;border-right:1px solid #e0e0e0"></div>
<div class="t" style="left:703.5px;top:200.7px;width:70.0px;text-align:center;font-size:6.5px;color:#383838;-webkit-text-stroke:0">0.1</div>
<div class="a" style="left:773.5px;top:195.5px;width:70.0px;height:17px;background:#f1f1f1;border-top:1px solid #dedede;border-right:1px solid #e0e0e0"></div>
<div class="t" style="left:773.5px;top:200.7px;width:70.0px;text-align:center;font-size:6.5px;color:#383838;-webkit-text-stroke:0">90</div>
<div class="a" style="left:843.5px;top:195.5px;width:70.0px;height:17px;background:#f1f1f1;border-top:1px solid #dedede;border-right:1px solid #e0e0e0"></div>
<div class="t" style="left:843.5px;top:200.7px;width:70.0px;text-align:center;font-size:6.5px;color:#383838;-webkit-text-stroke:0">Down</div>
<div class="a" style="left:603.5px;top:212.5px;width:30.0px;height:17px;background:#e8e8e8;border-top:1px solid #dedede;border-right:1px solid #e0e0e0"></div>
<div class="t" style="left:603.5px;top:217.7px;width:30.0px;text-align:center;font-size:6.5px;font-weight:bold;color:#222">8</div>
<div class="a" style="left:633.5px;top:212.5px;width:70.0px;height:17px;background:#f1f1f1;border-top:1px solid #dedede;border-right:1px solid #e0e0e0"></div>
<div class="t" style="left:633.5px;top:217.7px;width:70.0px;text-align:center;font-size:6.5px;color:#383838;-webkit-text-stroke:0">Bend H</div>
<div class="a" style="left:703.5px;top:212.5px;width:70.0px;height:17px;background:#f1f1f1;border-top:1px solid #dedede;border-right:1px solid #e0e0e0"></div>
<div class="t" style="left:703.5px;top:217.7px;width:70.0px;text-align:center;font-size:6.5px;color:#383838;-webkit-text-stroke:0">0.1</div>
<div class="a" style="left:773.5px;top:212.5px;width:70.0px;height:17px;background:#f1f1f1;border-top:1px solid #dedede;border-right:1px solid #e0e0e0"></div>
<div class="t" style="left:773.5px;top:217.7px;width:70.0px;text-align:center;font-size:6.5px;color:#383838;-webkit-text-stroke:0">90</div>
<div class="a" style="left:843.5px;top:212.5px;width:70.0px;height:17px;background:#f1f1f1;border-top:1px solid #dedede;border-right:1px solid #e0e0e0"></div>
<div class="t" style="left:843.5px;top:217.7px;width:70.0px;text-align:center;font-size:6.5px;color:#383838;-webkit-text-stroke:0">Up</div>
<div class="a" style="left:603.5px;top:229.5px;width:30.0px;height:17px;background:#e8e8e8;border-top:1px solid #dedede;border-right:1px solid #e0e0e0"></div>
<div class="t" style="left:603.5px;top:234.7px;width:30.0px;text-align:center;font-size:6.5px;font-weight:bold;color:#222">9</div>
<div class="a" style="left:633.5px;top:229.5px;width:70.0px;height:17px;background:#f1f1f1;border-top:1px solid #dedede;border-right:1px solid #e0e0e0"></div>
<div class="t" style="left:633.5px;top:234.7px;width:70.0px;text-align:center;font-size:6.5px;color:#383838;-webkit-text-stroke:0">Bend J</div>
<div class="a" style="left:703.5px;top:229.5px;width:70.0px;height:17px;background:#f1f1f1;border-top:1px solid #dedede;border-right:1px solid #e0e0e0"></div>
<div class="t" style="left:703.5px;top:234.7px;width:70.0px;text-align:center;font-size:6.5px;color:#383838;-webkit-text-stroke:0">0.1</div>
<div class="a" style="left:773.5px;top:229.5px;width:70.0px;height:17px;background:#f1f1f1;border-top:1px solid #dedede;border-right:1px solid #e0e0e0"></div>
<div class="t" style="left:773.5px;top:234.7px;width:70.0px;text-align:center;font-size:6.5px;color:#383838;-webkit-text-stroke:0">90</div>
<div class="a" style="left:843.5px;top:229.5px;width:70.0px;height:17px;background:#f1f1f1;border-top:1px solid #dedede;border-right:1px solid #e0e0e0"></div>
<div class="t" style="left:843.5px;top:234.7px;width:70.0px;text-align:center;font-size:6.5px;color:#383838;-webkit-text-stroke:0">Up</div>
<div class="a" style="left:603.5px;top:246.5px;width:349.5px;height:17px;background:#e3e3e3;border-top:1px solid #efefef"></div>
<svg style="left:607px;top:254px" width="5" height="4" viewBox="0 0 5 4"><path d="M.5 .8 L2.5 2.8 L4.5 .8" fill="none" stroke="#333" stroke-width=".8"/></svg>
<div class="t" style="left:614.5px;top:251.5px;font-size:8.3px;color:#222;letter-spacing:-0.040px">Other joints</div>
<div class="a" style="left:843.5px;top:264px;width:109.5px;height:16px;background:#fdfdfd"></div>
<div class="a" style="left:603.5px;top:264px;width:70.0px;height:17px;background:#e4e4e4;border-right:1px solid #ececec"></div>
<div class="t" style="left:603.5px;top:270.3px;width:70.0px;text-align:center;font-size:6.8px;font-weight:bold;color:#222;-webkit-text-stroke:0">Name</div>
<div class="a" style="left:673.5px;top:264px;width:70.0px;height:17px;background:#e4e4e4;border-right:1px solid #ececec"></div>
<div class="t" style="left:673.5px;top:270.3px;width:70.0px;text-align:center;font-size:6.8px;font-weight:bold;color:#222;-webkit-text-stroke:0">Type</div>
<div class="a" style="left:743.5px;top:264px;width:100.0px;height:17px;background:#e4e4e4;border-right:1px solid #ececec"></div>
<div class="t" style="left:743.5px;top:270.3px;width:100.0px;text-align:center;font-size:6.8px;font-weight:bold;color:#222;-webkit-text-stroke:0">Style</div>
<div class="a" style="left:955px;top:60px;width:4px;height:218px;background:#b6b6b6;border-radius:2px"></div>

<!-- 3D VIEW content -->
<svg style="left:0;top:0" width="960" height="540" viewBox="0 0 960 540">
<defs><linearGradient id="v3g" x1="1" y1="0" x2="0" y2="1"><stop offset="0" stop-color="#78a1b9"/><stop offset=".5" stop-color="#749bb4"/><stop offset="1" stop-color="#6f96af"/></linearGradient></defs>
<rect x="612" y="281.8" width="348" height="242.2" fill="url(#v3g)"/>
<path d="M612.6 281.8 V524" stroke="#2a3e4c" stroke-width="1.1"/>
<!-- window -->
<path d="M662.5 329.5 H731 V430 Q731 431.8 729.5 431.8 H728 Q726.5 431.8 726.5 430 V336 H666.8 V430 Q666.8 431.8 665.3 431.8 H664 Q662.5 431.8 662.5 430Z" fill="#fdfdfd" stroke="#25343e" stroke-width=".6"/>
<rect x="666.8" y="395.5" width="59.7" height="6" fill="#7aa3bf"/>
<rect x="666.8" y="426" width="59.7" height="6.2" fill="#7aa3bf"/>
<path d="M666.8 395.5 H726.5 M666.8 401.5 H726.5 M666.8 426 H726.5 M666.8 432.2 H726.5" stroke="#25343e" stroke-width=".7"/>
<path d="M668 398.5 H726 M668 429.1 H726" stroke="#25343e" stroke-width=".7" stroke-dasharray="2.2 2.3 .8 2.3"/>
<!-- bend lines -->
<rect x="745.5" y="282" width="7" height="242" fill="#78a2be"/><rect x="897.5" y="282" width="7" height="242" fill="#78a2be"/>
<path d="M745.5 281 V524 M897.5 281 V524" stroke="#2a4252" stroke-width=".9"/>
<path d="M752.3 281 V524 M904.3 281 V524" stroke="#4d6e86" stroke-width=".8"/>
<path d="M748.8 281 V524 M900.8 281 V524" stroke="#2e4858" stroke-width=".9" stroke-dasharray="2.6 2.6 .9 2.8"/>
<!-- white polygon -->
<path d="M936 363.5 H960 V498.5 H919.3 V429.5Z" fill="#fdfdfd" stroke="#25343e" stroke-width=".6"/>
<!-- view cube -->
<g fill="none" stroke="#a6bfd1" stroke-width="2.4" opacity=".9">
<path d="M889 305 Q895 298 903 296"/><path d="M926 296 Q934 298 940 304"/>
</g>
<g fill="#a6bfd1">
<path d="M886 309 L887.5 302 L892 306Z"/><path d="M943 309 L941.5 302 L937 306Z"/>
<path d="M915.3 292 L912 296 H918.6Z"/><path d="M915.3 362 L912 358 H918.6Z"/>
<path d="M878.5 326.5 L882.5 323 V330Z"/><path d="M951.5 326.5 L947.5 323 V330Z"/>
</g>
<path d="M901.3 306 V341" stroke="#2fb040" stroke-width=".8"/>
<path d="M901.3 341.5 H928" stroke="#c03030" stroke-width=".8"/>
<text x="931" y="344.5" font-size="6" fill="#c03030" font-family="Liberation Sans">X</text>
<text x="898.5" y="345" font-size="4.5" fill="#3040b0" font-family="Liberation Sans">Z</text>
<rect x="902" y="313" width="27" height="28" rx="3" fill="#a9bfd0"/>
<rect x="904.5" y="315.5" width="22" height="23" rx="4.5" fill="#fdfdfd"/>
<ellipse cx="904.5" cy="315" rx="2.8" ry="2.3" fill="#fff"/><ellipse cx="926.5" cy="315" rx="2.8" ry="2.3" fill="#fff"/><ellipse cx="904.5" cy="338.5" rx="2.8" ry="2.3" fill="#fff"/><ellipse cx="926.5" cy="338.5" rx="2.8" ry="2.3" fill="#fff"/>
<text x="915.5" y="329" font-size="6" fill="#222" text-anchor="middle" font-family="Liberation Sans">Top</text>
</svg>
<div class="a" style="left:940px;top:509px;width:20px;height:15px;background:#e6eaed"></div>
<svg style="left:944px;top:512px" width="12" height="9" viewBox="0 0 12 9"><path d="M1 8 V5.5 A5 4.5 0 0 1 11 5.5 V8Z" fill="none" stroke="#444" stroke-width=".9"/><path d="M3.5 6 A2.5 2 0 0 1 8.5 6" fill="none" stroke="#444" stroke-width=".8"/></svg>


<!-- TOP VIEW CUBE -->
<svg style="left:0;top:0" width="960" height="540" viewBox="0 0 960 540">
<g fill="none" stroke="#e3e3e3" stroke-width="2.6">
<path d="M529 62 Q535 54 545 50"/><path d="M566 50 Q576 54 582 62"/>
</g>
<g fill="#e3e3e3">
<path d="M526.5 66 L528 58 L533 62.5Z"/><path d="M584.5 66 L583 58 L578 62.5Z"/>
<path d="M555.5 45 L552 49 H559Z"/><path d="M555.5 120 L552 116 H559Z"/>
<path d="M520 83 L524 79.5 V86.5Z"/><path d="M591 83 L587 79.5 V86.5Z"/>
</g>
<path d="M546 69.5 H564 L568.5 74 V92.5 L564 97 H546 L541.5 92.5 V74Z" fill="#e2e4e6"/>
<path d="M547 72 H563 L566 75 V91.5 L563 94.5 H547 L544 91.5 V75Z" fill="#fdfdfd"/>
<path d="M541 68.3 H570.5 V97" fill="none" stroke="#d86a6a" stroke-width=".8"/>
<path d="M570.5 68.8 V97" stroke="#55aa55" stroke-width=".8"/>
<text x="537" y="71" font-size="5.5" fill="#c04848" font-family="Liberation Sans">X</text>
<text x="568" y="104" font-size="5.5" fill="#3a9a3a" font-family="Liberation Sans">Y</text>
<text x="555" y="85.3" font-size="6.5" fill="#333" text-anchor="middle" font-family="Liberation Sans" transform="rotate(180 555 83)">Top</text>
<path d="M574.5 112.5 L578.5 110.5 L582.5 112.5 V117.5 L578.5 119.5 L574.5 117.5Z" fill="#888"/><path d="M574.5 112.5 L578.5 114.5 L582.5 112.5 V117.5 L578.5 119.5 L574.5 117.5Z" fill="#666"/><path d="M578.5 114.5 V119.5 L582.5 117.5 V112.5Z" fill="#999"/>
<path d="M586.5 115 H590 L588.25 117Z" fill="#444"/>
<!-- list icon box -->
<path d="M122 269 H138.5 V285.5 H122" fill="#fdfdfd" stroke="#e6e6e6" stroke-width=".8"/>
<path d="M126 274.5 H129 M127.5 274.5 V282.5 M130 274.5 H135 M130 277 H135 M130 279.8 H135 M130 282 H135" stroke="#444" stroke-width=".8"/>
<!-- vertical toolbar -->
<g>
<rect x="585" y="227.8" width="15.2" height="16" fill="#fdfdfd" stroke="#dedede" stroke-width=".7"/>
<rect x="585" y="244.6" width="15.2" height="16" fill="#fdfdfd" stroke="#dedede" stroke-width=".7"/>
<rect x="585" y="261.4" width="15.2" height="16" fill="#fdfdfd" stroke="#dedede" stroke-width=".7"/>
<rect x="585" y="278.2" width="15.2" height="16" fill="#fdfdfd" stroke="#dedede" stroke-width=".7"/>
<rect x="585" y="295" width="15.2" height="16" fill="#fdfdfd" stroke="#dedede" stroke-width=".7"/>
<rect x="585" y="311.8" width="15.2" height="16" fill="#fdfdfd" stroke="#dedede" stroke-width=".7"/>
<path d="M588.5 240 L592.5 232.5 L596.5 240Z" fill="#9a9a9a"/><path d="M588.5 240.8 H596.5" stroke="#aaa" stroke-width="1" stroke-dasharray="1.5 .7"/><path d="M590.5 236 L594.5 236" stroke="#ccc" stroke-width=".6"/>
<rect x="587.8" y="247.8" width="4.5" height="4.5" fill="#3a5ab0"/><path d="M591 251 L594 249.5 L597 251 V255 L594 256.5 L591 255Z M591 251 L594 252.5 L597 251 M594 252.5 V256.5" fill="#fff" stroke="#444" stroke-width=".6"/>
<rect x="588" y="264.5" width="4.5" height="3.5" fill="#555"/><path d="M588.5 268.5 L590.5 274 H596 L597 268.5Z M590 271 H596 M592 266.5 L596.5 268.5" fill="none" stroke="#555" stroke-width=".6"/>
<rect x="588" y="281.3" width="4.5" height="3.5" fill="#555"/><rect x="589.5" y="284" width="7" height="7" rx="1" fill="none" stroke="#444" stroke-width=".7"/><circle cx="593" cy="287.5" r="2.2" fill="#555"/>
<rect x="588" y="298" width="4.5" height="3.5" fill="#555"/><path d="M588.5 301 H596.5 V304.5 H588.5Z M591.5 304.5 V308.5 H596.5 V304.5" fill="none" stroke="#444" stroke-width=".7"/>
<rect x="588" y="314.8" width="4" height="3" fill="#666"/><text x="592.8" y="324.5" font-size="7.5" fill="#222" text-anchor="middle" font-family="Liberation Serif" font-style="italic">(x)</text>
</g>
<!-- bottom view icons -->
<rect x="546" y="510" width="54" height="14" fill="#f3f4f5"/>
<path d="M551 521 H559 V519 H553.5 V516.5 H557 V519" fill="none" stroke="#444" stroke-width=".8"/><path d="M550.5 521 H559.5" stroke="#444" stroke-width="1"/>
<path d="M567.5 521.5 V519 A5 4 0 0 1 577.5 519 V521.5Z M569.8 520.5 A2.7 2.2 0 0 1 575.2 520.5" fill="none" stroke="#444" stroke-width=".8"/>
<path d="M586 521 H594 M587.5 521 V515.5 H592.5 V521 M588.5 518.3 H591.5" fill="none" stroke="#444" stroke-width=".8"/>
</svg>

<div class="a" style="left:20px;top:524.5px;width:940px;height:15.5px;background:#dcdcdc"></div>
<div class="a" style="left:20px;top:524.5px;width:17px;height:15.5px;background:#cdcdcd"></div>
<svg style="left:23px;top:527px" width="11" height="11" viewBox="0 0 11 11"><path d="M5.5 1.5 V9.5 M1.5 5.5 H9.5" stroke="#333" stroke-width="1.2"/></svg>
<div class="a" style="left:37px;top:524.5px;width:20px;height:15.5px;background:#dedede"></div>
<svg style="left:41px;top:527px" width="10" height="10" viewBox="0 0 10 10"><path d="M1 5 L5 1 L9 5 V9.5 H6 V6.5 H4 V9.5 H1Z" fill="#333"/></svg>
<svg style="left:50px;top:524.5px" width="74" height="16" viewBox="50 524.5 74 16"><path d="M53.5 524.5 L58 532.25 L53.5 540 H116 L120.5 532.25 L116 524.5Z" fill="#fdfdfd"/></svg>
<div class="t" style="left:65px;top:528.3px;font-size:7.5px;color:#444;letter-spacing:-0.349px">Components Fc</div>
<div class="a" style="left:121px;top:525.5px;width:16.5px;height:14.5px;background:#e9e9e9"></div>
<svg style="left:116px;top:524.5px" width="6" height="16" viewBox="116 524.5 6 16"><path d="M116 524.5 L120.5 532.25 L116 540Z" fill="#fdfdfd"/></svg>
<div class="t" style="left:122.2px;top:528.3px;font-size:7.5px;color:#555;letter-spacing:-0.632px">797</div>
<div class="a" style="left:138.6px;top:525.3px;width:42.8px;height:14.7px;background:#e9e9e9;border-radius:2px 2px 0 0"></div>
<div class="t" style="left:156.2px;top:528.3px;font-size:7.5px;color:#444;letter-spacing:-0.336px">T30 v3</div>
<div class="a" style="left:183.1px;top:525.3px;width:72.99999999999999px;height:14.7px;background:#e9e9e9;border-radius:2px 2px 0 0"></div>
<div class="t" style="left:199.7px;top:528.8px;font-size:6.9px;color:#444;letter-spacing:-0.276px">NVIDIA QUADRO</div>
<div class="a" style="left:257.3px;top:525.3px;width:60.40000000000002px;height:14.7px;background:#e9e9e9;border-radius:2px 2px 0 0"></div>
<div class="t" style="left:273.7px;top:528.3px;font-size:7.5px;color:#444;letter-spacing:-0.277px">Motherboard</div>
<div class="a" style="left:318.90000000000003px;top:525.3px;width:87.49999999999999px;height:14.7px;background:#e9e9e9;border-radius:2px 2px 0 0"></div>
<div class="t" style="left:335.8px;top:528.3px;font-size:7.5px;color:#444;letter-spacing:-0.350px">Phobya Power Switch</div>
<div class="a" style="left:407.6px;top:525.3px;width:55.10000000000001px;height:14.7px;background:#e9e9e9;border-radius:2px 2px 0 0"></div>
<div class="t" style="left:424.7px;top:528.3px;font-size:7.5px;color:#444;letter-spacing:-0.418px">IEC Socket</div>
<div class="a" style="left:463.90000000000003px;top:525.3px;width:56.79999999999994px;height:14.7px;background:#e9e9e9;border-radius:2px 2px 0 0"></div>
<div class="t" style="left:482px;top:528.3px;font-size:7.5px;color:#444;letter-spacing:-0.640px">CPU Cooler</div>
<div class="a" style="left:521.9px;top:525.3px;width:35.00000000000004px;height:14.7px;background:#e9e9e9;border-radius:2px 2px 0 0"></div>
<div class="t" style="left:538.7px;top:528.3px;font-size:7.5px;color:#444;letter-spacing:-0.986px">SSD</div>
<div class="a" style="left:558.1px;top:525.3px;width:59.59999999999995px;height:14.7px;background:#fdfdfd;border-radius:2px 2px 0 0"></div>
<div class="a" style="left:558.1px;top:538.8px;width:59.59999999999995px;height:1.2px;background:#2a4ea8"></div>
<div class="t" style="left:574.7px;top:528.3px;font-size:7.5px;color:#444;letter-spacing:-0.326px">Part Studio 1</div>
<div class="a" style="left:618.9px;top:525.3px;width:51.3px;height:14.7px;background:#e9e9e9;border-radius:2px 2px 0 0"></div>
<div class="t" style="left:636px;top:528.3px;font-size:7.5px;color:#444;letter-spacing:-0.226px">Old Parts</div>
<div class="a" style="left:671.4px;top:525.3px;width:59.70000000000009px;height:14.7px;background:#e9e9e9;border-radius:2px 2px 0 0"></div>
<div class="t" style="left:688px;top:528.3px;font-size:7.5px;color:#444;letter-spacing:-0.468px">SSD Bracket</div>
<div class="a" style="left:732.3000000000001px;top:525.3px;width:77.8999999999999px;height:14.7px;background:#e9e9e9;border-radius:2px 2px 0 0"></div>
<div class="t" style="left:749.2px;top:528.3px;font-size:7.5px;color:#444;letter-spacing:-0.517px">ZF3-Fan case - BL</div>
<div class="a" style="left:811.4px;top:525.3px;width:60.50000000000004px;height:14.7px;background:#e9e9e9;border-radius:2px 2px 0 0"></div>
<div class="t" style="left:827.5px;top:528.3px;font-size:7.5px;color:#444;letter-spacing:-0.327px">CAD Imports</div>
<div class="a" style="left:873.1px;top:525.3px;width:62.3px;height:14.7px;background:#e9e9e9;border-radius:2px 2px 0 0"></div>
<div class="t" style="left:889px;top:528.3px;font-size:7.5px;color:#444">ddr4_dimm_ba</div>
<svg style="left:0;top:0" width="960" height="540" viewBox="0 0 960 540"><rect x="144.7" y="527.5" width="8.5" height="8.5" rx="1" fill="#fff" stroke="#444" stroke-width=".8"/><rect x="145.7" y="528.5" width="5.5" height="5.5" fill="#5a5a5a"/><path d="M144.7 529.5 H151.2 V536" fill="none" stroke="#333" stroke-width=".6"/><rect x="188.2" y="527.5" width="8.5" height="8.5" rx="1" fill="#fff" stroke="#444" stroke-width=".8"/><rect x="189.2" y="528.5" width="5.5" height="5.5" fill="#5a5a5a"/><path d="M188.2 529.5 H194.7 V536" fill="none" stroke="#333" stroke-width=".6"/><rect x="262.2" y="527.5" width="8.5" height="8.5" rx="1" fill="#fff" stroke="#444" stroke-width=".8"/><rect x="263.2" y="528.5" width="5.5" height="5.5" fill="#5a5a5a"/><path d="M262.2 529.5 H268.7 V536" fill="none" stroke="#333" stroke-width=".6"/><rect x="324.3" y="527.5" width="8.5" height="8.5" rx="1" fill="#fff" stroke="#444" stroke-width=".8"/><rect x="325.3" y="528.5" width="5.5" height="5.5" fill="#5a5a5a"/><path d="M324.3 529.5 H330.8 V536" fill="none" stroke="#333" stroke-width=".6"/><rect x="413.2" y="527.5" width="8.5" height="8.5" rx="1" fill="#fff" stroke="#444" stroke-width=".8"/><rect x="414.2" y="528.5" width="5.5" height="5.5" fill="#5a5a5a"/><path d="M413.2 529.5 H419.7 V536" fill="none" stroke="#333" stroke-width=".6"/><rect x="470.5" y="527.5" width="8.5" height="8.5" rx="1" fill="#fff" stroke="#444" stroke-width=".8"/><rect x="471.5" y="528.5" width="5.5" height="5.5" fill="#5a5a5a"/><path d="M470.5 529.5 H477.0 V536" fill="none" stroke="#333" stroke-width=".6"/><rect x="527.2" y="527.5" width="8.5" height="8.5" rx="1" fill="#fff" stroke="#444" stroke-width=".8"/><rect x="528.2" y="528.5" width="5.5" height="5.5" fill="#5a5a5a"/><path d="M527.2 529.5 H533.7 V536" fill="none" stroke="#333" stroke-width=".6"/><path d="M564.2 536 V529.5 L566.2 527.5 H571.2 V534 L569.2 536Z M566.2 527.5 V534 H571.2 M566.2 534 L564.2 536" fill="none" stroke="#444" stroke-width=".8"/><path d="M623.5 528.5 H627.0 L628.0 529.5 H633.0 V535.5 H623.5Z" fill="none" stroke="#555" stroke-width=".8"/><rect x="676.5" y="528" width="8.5" height="8" fill="none" stroke="#444" stroke-width=".8"/><path d="M680.5 536 V532.5 H685.0" fill="none" stroke="#444" stroke-width=".7"/><rect x="737.7" y="527.5" width="8.5" height="8.5" rx="1" fill="#fff" stroke="#444" stroke-width=".8"/><rect x="738.7" y="528.5" width="5.5" height="5.5" fill="#5a5a5a"/><path d="M737.7 529.5 H744.2 V536" fill="none" stroke="#333" stroke-width=".6"/><path d="M815.0 528.5 H818.5 L819.5 529.5 H824.5 V535.5 H815.0Z" fill="none" stroke="#555" stroke-width=".8"/><path d="M878.5 536 V529.5 L880.5 527.5 H885.5 V534 L883.5 536Z M880.5 527.5 V534 H885.5 M880.5 534 L878.5 536" fill="none" stroke="#444" stroke-width=".8"/></svg>
<div class="a" style="left:936px;top:524.5px;width:24px;height:15.5px;background:#d8d8d8"></div>
<svg style="left:936px;top:527px" width="24" height="11" viewBox="0 0 24 11"><path d="M7 2 L4 5.5 L7 9 M17 2 L20 5.5 L17 9" fill="none" stroke="#333" stroke-width="1.2"/></svg>
<svg style="left:4px;top:527px" width="14" height="11" viewBox="0 0 14 11"><rect x="1" y="2" width="7" height="5" fill="#333"/><circle cx="9" cy="6.5" r="2.8" fill="#fff" stroke="#222" stroke-width="1"/><path d="M11 8.5 L13 10.5" stroke="#222" stroke-width="1.2"/></svg>
</body></html>
